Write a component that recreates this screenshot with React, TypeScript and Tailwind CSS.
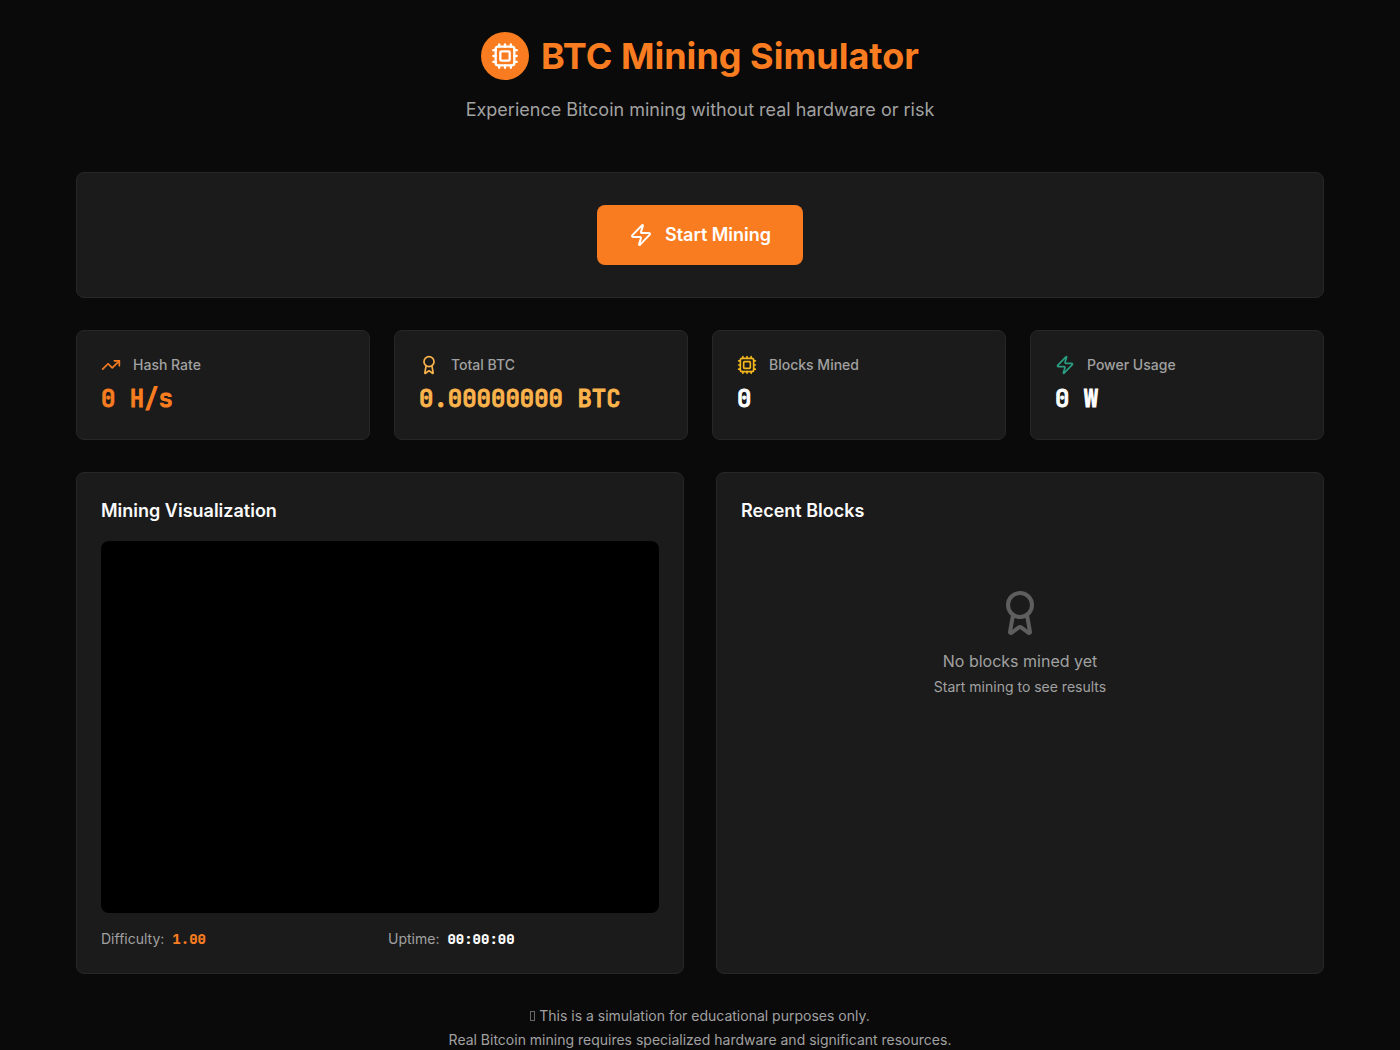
import React, { useEffect, useState } from 'react';
import { Award, Cpu, TrendingUp, Zap } from 'lucide-react';

interface StatCardProps {
  icon: React.ReactNode;
  label: string;
  value: string;
  valueClass: string;
}

function StatCard({ icon, label, value, valueClass }: StatCardProps) {
  return (
    <div className="bg-[#1b1b1b] border border-[#272727] rounded-lg p-6">
      <div className="flex items-center gap-3 mb-2">
        {icon}
        <span className="text-sm font-medium text-[#a1a1a1]">{label}</span>
      </div>
      <p className={`font-['JetBrains_Mono','Liberation_Mono',monospace] text-2xl font-medium [-webkit-text-stroke:1px_currentColor] ${valueClass}`}>{value}</p>
    </div>
  );
}

function formatUptime(seconds: number) {
  const parts = [Math.floor(seconds / 3600), Math.floor(seconds / 60) % 60, seconds % 60];
  return parts.map((n) => String(n).padStart(2, '0')).join(':');
}

export default function App() {
  const [mining, setMining] = useState(false);
  const [uptime, setUptime] = useState(0);

  useEffect(() => {
    if (!mining) return;
    const timer = setInterval(() => setUptime((s) => s + 1), 1000);
    return () => clearInterval(timer);
  }, [mining]);

  return (
    <div className="min-h-screen bg-[#0a0a0a] text-[#fafafa] font-['Inter',sans-serif]">
      <div className="max-w-7xl mx-auto px-4 py-8">
        <header className="text-center mb-12">
          <div className="flex items-center justify-center gap-3 mb-4">
            <div className="w-12 h-12 rounded-full bg-[#f97d20] flex items-center justify-center">
              <Cpu className="w-7 h-7 text-white" />
            </div>
            <h1 className="text-4xl font-bold text-[#f97d20]">BTC Mining Simulator</h1>
          </div>
          <p className="text-lg text-[#a1a1a1]">Experience Bitcoin mining without real hardware or risk</p>
        </header>

        <section className="bg-[#1b1b1b] border border-[#272727] rounded-lg p-8 mb-8 flex justify-center">
          <button
            type="button"
            onClick={() => setMining(!mining)}
            className="flex items-center gap-3 px-8 py-4 rounded-lg bg-[#f97d20] hover:bg-[#e56f15] text-lg font-semibold text-white cursor-pointer"
          >
            <Zap className="w-6 h-6" />
            {mining ? 'Stop Mining' : 'Start Mining'}
          </button>
        </section>

        <section className="grid grid-cols-1 md:grid-cols-2 lg:grid-cols-4 gap-6 mb-8">
          <StatCard icon={<TrendingUp className="w-5 h-5 text-[#f97d20]" />} label="Hash Rate" value="0 H/s" valueClass="text-[#f97d20]" />
          <StatCard icon={<Award className="w-5 h-5 text-[#fbb34c]" />} label="Total BTC" value="0.00000000 BTC" valueClass="text-[#fbb34c]" />
          <StatCard icon={<Cpu className="w-5 h-5 text-[#f5b81c]" />} label="Blocks Mined" value="0" valueClass="text-white" />
          <StatCard icon={<Zap className="w-5 h-5 text-[#2a9d83]" />} label="Power Usage" value="0 W" valueClass="text-white" />
        </section>

        <div className="grid grid-cols-1 lg:grid-cols-2 gap-8">
          <section className="bg-[#1b1b1b] border border-[#272727] rounded-lg p-6">
            <h2 className="text-lg font-semibold mb-4">Mining Visualization</h2>
            <div className="aspect-3/2 rounded-lg bg-black" />
            <div className="grid grid-cols-2 gap-4 mt-4 text-sm">
              <div className="flex gap-2">
                <span className="text-[#a1a1a1]">Difficulty:</span>
                <span className="font-['JetBrains_Mono','Liberation_Mono',monospace] font-extrabold text-[#f97d20]">1.00</span>
              </div>
              <div className="flex gap-2">
                <span className="text-[#a1a1a1]">Uptime:</span>
                <span className="font-['JetBrains_Mono','Liberation_Mono',monospace] font-extrabold text-white">{formatUptime(uptime)}</span>
              </div>
            </div>
          </section>

          <section className="bg-[#1b1b1b] border border-[#272727] rounded-lg p-6">
            <h2 className="text-lg font-semibold mb-4">Recent Blocks</h2>
            <div className="py-12 text-center text-[#a1a1a1]">
              <Award className="w-12 h-12 mx-auto mb-3 opacity-50" />
              <p>No blocks mined yet</p>
              <p className="text-sm mt-1">Start mining to see results</p>
            </div>
          </section>
        </div>

        <footer className="mt-8 text-center text-sm text-[#a1a1a1]">
          <p>
            <span className="inline-block w-[5px] h-2.5 border border-[#666666]" /> This is a simulation for educational purposes only.
          </p>
          <p className="mt-1">Real Bitcoin mining requires specialized hardware and significant resources.</p>
        </footer>
      </div>
    </div>
  );
}
